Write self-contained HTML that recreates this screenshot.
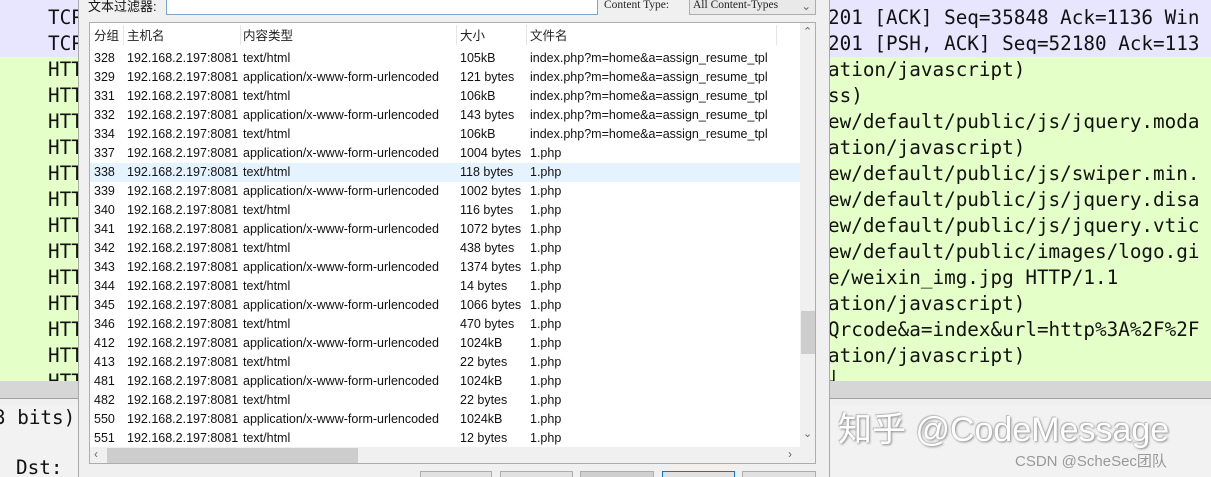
<!DOCTYPE html><html><head><meta charset="utf-8"><style>
*{margin:0;padding:0;box-sizing:border-box}
html,body{width:1211px;height:477px;overflow:hidden}
body{position:relative;background:#f0f0f0;font-family:"Liberation Sans","Noto Sans CJK SC",sans-serif}
.bg{position:absolute;left:0;width:1211px}
.mono{position:absolute;font-family:"DejaVu Sans Mono","Liberation Mono",monospace;font-size:19.3px;color:#111;white-space:pre;line-height:26px}
.dlg{position:absolute;left:78px;top:0;width:752px;height:477px;background:#f0f0f0;border-left:1px solid #aaa;border-right:1px solid #aaa}
.list{position:absolute;left:89px;top:22px;width:727px;height:442px;background:#fff;border:1px solid #adadad;overflow:hidden;font-size:12.5px;color:#111}
.r{position:absolute;left:0;height:19px;width:710px;line-height:19px;white-space:nowrap}
.r span{position:absolute}
.c1{left:4px}.c2{left:37px}.c3{left:153px}.c4{left:370px}.c5{left:440px}
.hd{top:1px;height:24px;line-height:24px;color:#222}
.sep{position:absolute;top:2px;width:1px;height:20px;background:#e5e5e5}
</style></head><body>
<div class="bg" style="top:0;height:57px;background:#e7e6fe"></div>
<div class="bg" style="top:57px;height:324px;background:#e4ffc7"></div>
<div class="bg" style="top:381px;height:17px;background:#d6d6d6"></div>
<div class="bg" style="top:398px;height:1px;background:#a0a0a0"></div>
<div class="bg" style="top:405px;height:72px;background:#f2f2f2"></div>
<div class="mono" style="left:48px;top:5px;height:376px;overflow:hidden">TCP
TCP
HTT
HTT
HTT
HTT
HTT
HTT
HTT
HTT
HTT
HTT
HTT
HTT
HTT</div>
<div class="mono" style="left:-6px;top:405px">3 bits)</div>
<div class="mono" style="left:16px;top:455px">Dst:</div>
<div class="mono" style="left:828px;top:5px;height:376px;overflow:hidden">201 [ACK] Seq=35848 Ack=1136 Win
201 [PSH, ACK] Seq=52180 Ack=113
ation/javascript)
ss)
ew/default/public/js/jquery.moda
ation/javascript)
ew/default/public/js/swiper.min.
ew/default/public/js/jquery.disa
ew/default/public/js/jquery.vtic
ew/default/public/images/logo.gi
e/weixin_img.jpg HTTP/1.1
ation/javascript)
Qrcode&a=index&url=http%3A%2F%2F
ation/javascript)
┘</div>
<div style="position:absolute;left:838px;top:402px;font-size:34px;color:#fff;text-shadow:1px 1px 2px #888,-1px -1px 1px #bbb;font-family:'Liberation Sans','Noto Sans CJK SC',sans-serif">知乎 @CodeMessage</div>
<div style="position:absolute;left:1015px;top:450px;font-size:15px;color:#999">CSDN @ScheSec团队</div>
<div class="dlg"></div>
<div style="position:absolute;left:88px;top:-4px;font-size:13px;color:#111">文本过滤器:</div>
<div style="position:absolute;left:166px;top:-2px;width:432px;height:17px;background:#fff;border:1px solid #7aa7c9"></div>
<div style="position:absolute;left:604px;top:-1px;font-family:'Liberation Serif',serif;font-size:11.5px;color:#222">Content Type:</div>
<div style="position:absolute;left:689px;top:-2px;width:127px;height:17px;background:#e9e9e9;border:1px solid #adadad;font-family:'Liberation Serif',serif;font-size:11.5px;padding-left:3px;color:#222">All Content-Types <span style="position:absolute;right:4px;color:#666">⌄</span></div>
<div class="list">
<div class="r hd"><span class="c1">分组</span><span class="c2">主机名</span><span class="c3">内容类型</span><span class="c4">大小</span><span class="c5">文件名</span></div>
<div class="sep" style="left:33px"></div><div class="sep" style="left:150px"></div><div class="sep" style="left:366px"></div><div class="sep" style="left:436px"></div><div class="sep" style="left:686px"></div>
<div style="position:absolute;left:12px;top:-5px;font-size:10px;color:#666">^</div>
<div style="position:absolute;left:0;top:140px;width:710px;height:19px;background:#e5f3ff"></div>
<div class="r" style="top:26px"><span class="c1">328</span><span class="c2">192.168.2.197:8081</span><span class="c3">text/html</span><span class="c4">105kB</span><span class="c5">index.php?m=home&amp;a=assign_resume_tpl</span></div>
<div class="r" style="top:45px"><span class="c1">329</span><span class="c2">192.168.2.197:8081</span><span class="c3">application/x-www-form-urlencoded</span><span class="c4">121 bytes</span><span class="c5">index.php?m=home&amp;a=assign_resume_tpl</span></div>
<div class="r" style="top:64px"><span class="c1">331</span><span class="c2">192.168.2.197:8081</span><span class="c3">text/html</span><span class="c4">106kB</span><span class="c5">index.php?m=home&amp;a=assign_resume_tpl</span></div>
<div class="r" style="top:83px"><span class="c1">332</span><span class="c2">192.168.2.197:8081</span><span class="c3">application/x-www-form-urlencoded</span><span class="c4">143 bytes</span><span class="c5">index.php?m=home&amp;a=assign_resume_tpl</span></div>
<div class="r" style="top:102px"><span class="c1">334</span><span class="c2">192.168.2.197:8081</span><span class="c3">text/html</span><span class="c4">106kB</span><span class="c5">index.php?m=home&amp;a=assign_resume_tpl</span></div>
<div class="r" style="top:121px"><span class="c1">337</span><span class="c2">192.168.2.197:8081</span><span class="c3">application/x-www-form-urlencoded</span><span class="c4">1004 bytes</span><span class="c5">1.php</span></div>
<div class="r" style="top:140px"><span class="c1">338</span><span class="c2">192.168.2.197:8081</span><span class="c3">text/html</span><span class="c4">118 bytes</span><span class="c5">1.php</span></div>
<div class="r" style="top:159px"><span class="c1">339</span><span class="c2">192.168.2.197:8081</span><span class="c3">application/x-www-form-urlencoded</span><span class="c4">1002 bytes</span><span class="c5">1.php</span></div>
<div class="r" style="top:178px"><span class="c1">340</span><span class="c2">192.168.2.197:8081</span><span class="c3">text/html</span><span class="c4">116 bytes</span><span class="c5">1.php</span></div>
<div class="r" style="top:197px"><span class="c1">341</span><span class="c2">192.168.2.197:8081</span><span class="c3">application/x-www-form-urlencoded</span><span class="c4">1072 bytes</span><span class="c5">1.php</span></div>
<div class="r" style="top:216px"><span class="c1">342</span><span class="c2">192.168.2.197:8081</span><span class="c3">text/html</span><span class="c4">438 bytes</span><span class="c5">1.php</span></div>
<div class="r" style="top:235px"><span class="c1">343</span><span class="c2">192.168.2.197:8081</span><span class="c3">application/x-www-form-urlencoded</span><span class="c4">1374 bytes</span><span class="c5">1.php</span></div>
<div class="r" style="top:254px"><span class="c1">344</span><span class="c2">192.168.2.197:8081</span><span class="c3">text/html</span><span class="c4">14 bytes</span><span class="c5">1.php</span></div>
<div class="r" style="top:273px"><span class="c1">345</span><span class="c2">192.168.2.197:8081</span><span class="c3">application/x-www-form-urlencoded</span><span class="c4">1066 bytes</span><span class="c5">1.php</span></div>
<div class="r" style="top:292px"><span class="c1">346</span><span class="c2">192.168.2.197:8081</span><span class="c3">text/html</span><span class="c4">470 bytes</span><span class="c5">1.php</span></div>
<div class="r" style="top:311px"><span class="c1">412</span><span class="c2">192.168.2.197:8081</span><span class="c3">application/x-www-form-urlencoded</span><span class="c4">1024kB</span><span class="c5">1.php</span></div>
<div class="r" style="top:330px"><span class="c1">413</span><span class="c2">192.168.2.197:8081</span><span class="c3">text/html</span><span class="c4">22 bytes</span><span class="c5">1.php</span></div>
<div class="r" style="top:349px"><span class="c1">481</span><span class="c2">192.168.2.197:8081</span><span class="c3">application/x-www-form-urlencoded</span><span class="c4">1024kB</span><span class="c5">1.php</span></div>
<div class="r" style="top:368px"><span class="c1">482</span><span class="c2">192.168.2.197:8081</span><span class="c3">text/html</span><span class="c4">22 bytes</span><span class="c5">1.php</span></div>
<div class="r" style="top:387px"><span class="c1">550</span><span class="c2">192.168.2.197:8081</span><span class="c3">application/x-www-form-urlencoded</span><span class="c4">1024kB</span><span class="c5">1.php</span></div>
<div class="r" style="top:406px"><span class="c1">551</span><span class="c2">192.168.2.197:8081</span><span class="c3">text/html</span><span class="c4">12 bytes</span><span class="c5">1.php</span></div>
<div style="position:absolute;left:710px;top:0;width:16px;height:424px;background:#f0f0f0"></div>
<div style="position:absolute;left:711px;top:288px;width:14px;height:43px;background:#cdcdcd"></div>
<div style="position:absolute;left:713px;top:2px;font-size:11px;color:#666">⌃</div>
<div style="position:absolute;left:713px;top:404px;font-size:11px;color:#666">⌄</div>
<div style="position:absolute;left:0;top:424px;width:726px;height:17px;background:#f0f0f0"></div>
<div style="position:absolute;left:17px;top:425px;width:251px;height:15px;background:#cdcdcd"></div>
<div style="position:absolute;left:4px;top:424px;font-size:12px;color:#666">‹</div>
<div style="position:absolute;left:698px;top:424px;font-size:12px;color:#666">›</div>
</div>
<div style="position:absolute;left:420px;top:471px;width:72px;height:10px;background:#e1e1e1;border:1px solid #adadad"></div>
<div style="position:absolute;left:500px;top:471px;width:73px;height:10px;background:#e1e1e1;border:1px solid #adadad"></div>
<div style="position:absolute;left:580px;top:471px;width:74px;height:10px;background:#cfcfcf;border:1px solid #adadad"></div>
<div style="position:absolute;left:662px;top:471px;width:73px;height:10px;background:#e1e1e1;border:1px solid #0078d7"></div>
<div style="position:absolute;left:742px;top:471px;width:74px;height:10px;background:#e1e1e1;border:1px solid #adadad"></div>
</body></html>
